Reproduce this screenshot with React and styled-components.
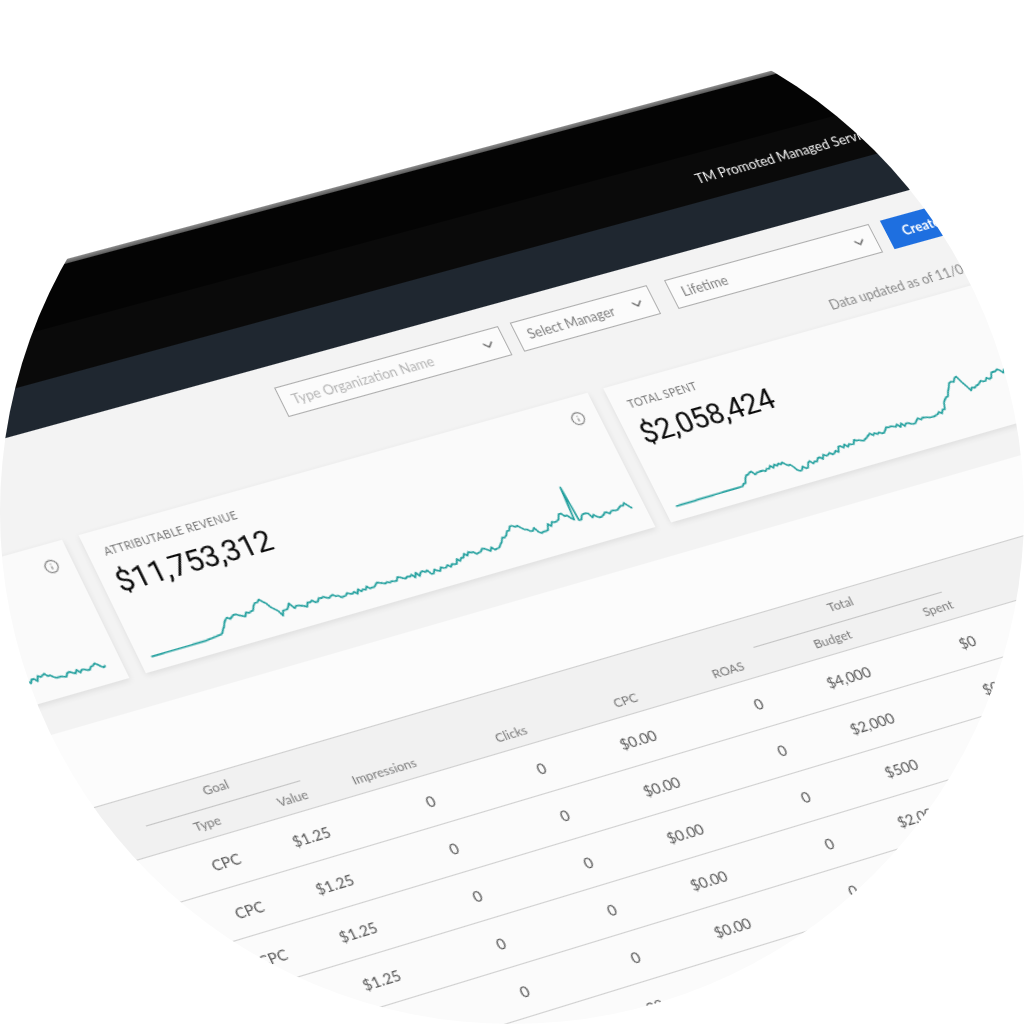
import React from 'react';
import styled, { createGlobalStyle } from 'styled-components';
import { ChevronDown, Info } from 'lucide-react';

// flat page -> tilted screen, from four measured points of the reference
const projection = (() => {
  const [x0, y0, x1, y1, x2, y2, x3, y3] = [-42, 288, 466, 152.3, 758.3, 730.5, 247.9, 882.6];
  const left = 120;
  const w = 507;
  const h = 595;
  const dx1 = x1 - x2;
  const dx2 = x3 - x2;
  const sx = x0 - x1 + x2 - x3;
  const dy1 = y1 - y2;
  const dy2 = y3 - y2;
  const sy = y0 - y1 + y2 - y3;
  const den = dx1 * dy2 - dx2 * dy1;
  const g = (sx * dy2 - dx2 * sy) / den;
  const k = (dx1 * sy - sx * dy1) / den;
  const A = (x1 - x0 + g * x1) / w;
  const B = (x3 - x0 + k * x3) / h;
  const D = (y1 - y0 + g * y1) / w;
  const E = (y3 - y0 + k * y3) / h;
  const G = g / w;
  const H = k / h;
  const C = x0 - left * A;
  const F = y0 - left * D;
  const I = 1 - left * G;
  return [A, D, 0, G, B, E, 0, H, 0, 0, 1, 0, C, F, 0, I].join(',');
})();

const noise = (i, seed) => {
  const n = Math.sin(i * 12.9898 + seed) * 43758.5453;
  return n - Math.floor(n) - 0.5;
};

const jagged = (points, seed, calmUntil = 0, amp = 5) => {
  const out = [];
  let i = 0;
  points.forEach(([x, y], p) => {
    const next = points[p + 1];
    if (!next) {
      out.push([x, y]);
      return;
    }
    const steps = Math.max(1, Math.round(Math.abs(next[0] - x) / 2.2));
    for (let s = 0; s < steps; s++) {
      const t = s / steps;
      const px = x + (next[0] - x) * t;
      const py = y + (next[1] - y) * t;
      const a = px < calmUntil ? 0 : s === 0 ? 0 : amp;
      out.push([px, py + noise(i++, seed) * a]);
    }
  });
  return out.map(([x, y]) => `${x.toFixed(1)},${y.toFixed(1)}`).join(' ');
};

const revenueLine = [[16, 118.6], [68, 118.4], [84, 116.7], [94, 104.6], [117, 104.5], [131, 95], [138, 105], [145, 115.7], [155, 106], [158, 112], [194, 110.4], [205, 114], [244, 112], [310, 115], [327, 106.4], [358, 110.3], [381, 93.5], [406, 107], [429, 95], [438, 104], [440, 71], [442, 106], [451, 101.3], [455, 107], [474, 106], [489, 101.8], [494, 108.9]];
const spentLine = [[16, 118.5], [84, 117.7], [92, 108.7], [124, 107.8], [130, 106], [140, 117], [183, 109.4], [226, 103.4], [296, 103], [314, 81], [326, 72.5], [333, 89.4], [364, 78], [420, 86], [500, 70]];
const leftLine = [[415, 113.5], [434, 108.4], [447, 114], [485, 113], [491, 115.4]];

const rows = [
  ['CPC', '$1.25', '0', '0', '$0.00', '0', '$4,000', '$0'],
  ['CPC', '$1.25', '0', '0', '$0.00', '0', '$2,000', '$0'],
  ['CPC', '$1.25', '0', '0', '$0.00', '0', '$500', ''],
  ['', '$1.25', '0', '0', '$0.00', '0', '$2,000', ''],
  ['', '$1.25', '0', '0', '$0.00', '0', '', ''],
  ['', '', '', '38', '$1.10', '', '', '']
];

const headers = ['Type', 'Value', 'Impressions', 'Clicks', 'CPC', 'ROAS', 'Budget', 'Spent'];

const Sparkline = ({ points, seed, calmUntil }) => (
  <Chart viewBox="4.5 60.5 501.5 72" preserveAspectRatio="none">
    <polyline points={ jagged(points, seed, calmUntil) } />
  </Chart>
);

const Select = ({ width, label, faint, gap }) => (
  <SelectBox $width={ width } $gap={ gap }>
    <SelectText $faint={ faint }>{ label }</SelectText>
    <ChevronDown size={ 16 } color="#666" />
  </SelectBox>
);

const StatCard = ({ label, value, points, seed, calmUntil }) => (
  <Card>
    <CardHead>
      <CardLabel>{ label }</CardLabel>
      <Info size={ 14 } color="#858585" />
    </CardHead>
    <CardValue>{ value }</CardValue>
    <Sparkline points={ points } seed={ seed } calmUntil={ calmUntil } />
  </Card>
);

export default function App() {
  return (
    <>
      <GlobalStyle />
      <Circle>
        <Dashboard>
          <Bevel />
          <BlackBand />
          <TitleBand>
            <Title>TM Promoted Managed Services</Title>
          </TitleBand>
          <NavBand />
          <Main>
            <FilterRow>
              <Select width={ 225 } label="Type Organization Name" faint />
              <Select width={ 140 } label="Select Manager" />
              <Select width={ 213 } label="Lifetime" gap={ 6 } />
              <CreateButton>Create Campaign</CreateButton>
            </FilterRow>
            <NoteRow>Data updated as of 11/06/2018</NoteRow>
            <CardRow>
              <StatCard label="" value="" points={ leftLine } seed={ 3 } />
              <StatCard label="Attributable Revenue" value="$11,753,312" points={ revenueLine } seed={ 7 } calmUntil={ 84 } />
              <StatCard label="Total Spent" value="$2,058,424" points={ spentLine } seed={ 11 } calmUntil={ 84 } />
            </CardRow>
            <Panel>
              <TableHead>
                <GoalGroup>Goal</GoalGroup>
                <TotalGroup>Total</TotalGroup>
                { headers.map((h, i) => (
                  <HeadCell key={ h } $col={ i + 2 } $center={ i < 2 }>{ h }</HeadCell>
                )) }
              </TableHead>
              { rows.map((r, i) => (
                <TableRow key={ i }>
                  { r.map((c, j) => (
                    <Cell key={ j } $col={ j + 2 } $center={ j < 2 }>{ c }</Cell>
                  )) }
                </TableRow>
              )) }
            </Panel>
          </Main>
        </Dashboard>
      </Circle>
    </>
  );
}

const GlobalStyle = createGlobalStyle`
  html, body {
    margin: 0;
    background: #fff;
  }
`;

const Circle = styled.div`
  width: 1024px;
  height: 1024px;
  border-radius: 50%;
  overflow: hidden;
  background: #fff;
`;

const Dashboard = styled.div`
  width: 1130px;
  height: 860px;
  overflow: hidden;
  font-family: Lato, "Open Sans", sans-serif;
  transform-origin: 0 0;
  transform: matrix3d(${ projection });
  filter: blur(0.6px);
`;

const Bevel = styled.div`
  height: 4px;
  background: linear-gradient(#8c8c8c, #5a5a5a);
`;

const BlackBand = styled.div`
  height: 54px;
  background: #040404;
`;

const TitleBand = styled.div`
  box-sizing: border-box;
  height: 46px;
  padding: 2px 0 0 823px;
  display: flex;
  align-items: center;
  background: #0a0a0a;
`;

const Title = styled.span`
  font-size: 13.3px;
  color: #f4f4f4;
  white-space: nowrap;
`;

const NavBand = styled.div`
  height: 42px;
  background: #1f2730;
`;

const Main = styled.div`
  height: 714px;
  background: #f3f3f3;
`;

const FilterRow = styled.div`
  display: flex;
  gap: 12px;
  padding: 21px 0 0 352px;
`;

const SelectBox = styled.div`
  box-sizing: border-box;
  width: ${ p => p.$width }px;
  height: 30px;
  margin-left: ${ p => p.$gap || 0 }px;
  padding: 0 8px 0 10px;
  display: flex;
  align-items: center;
  justify-content: space-between;
  flex: none;
  background: #fbfbfb;
  border: 1.5px solid #adadad;
`;

const SelectText = styled.span`
  font-size: 13px;
  color: ${ p => p.$faint ? '#b5b5b5' : '#808080' };
`;

const CreateButton = styled.div`
  box-sizing: border-box;
  width: 130px;
  height: 30px;
  padding-left: 16px;
  display: flex;
  align-items: center;
  flex: none;
  font-size: 13px;
  font-weight: 700;
  color: #fff;
  background: #1e6fe0;
`;

const NoteRow = styled.div`
  height: 53px;
  box-sizing: border-box;
  padding: 26px 0 0 886px;
  font-size: 13px;
  line-height: 18px;
  color: #8a8a8a;
  white-space: nowrap;
`;

const CardRow = styled.div`
  display: flex;
  gap: 16px;
  margin-left: -403px;
`;

const Card = styled.div`
  box-sizing: border-box;
  width: 507px;
  height: 138px;
  flex: none;
  display: flex;
  flex-direction: column;
  background: #fafafa;
  box-shadow: 0 2px 6px rgba(0, 0, 0, 0.09);
`;

const CardHead = styled.div`
  display: flex;
  align-items: center;
  justify-content: space-between;
  padding: 11px 13px 0 15px;
  height: 20px;
`;

const CardLabel = styled.span`
  font-size: 10.5px;
  letter-spacing: 0.3px;
  color: #7a7a7a;
  text-transform: uppercase;
`;

const CardValue = styled.div`
  padding-left: 13px;
  height: 32px;
  margin-top: 5px;
  font-family: Roboto, Lato, sans-serif;
  font-weight: 400;
  font-size: 28.5px;
  line-height: 32px;
  letter-spacing: -0.4px;
  color: #0c0c0c;
`;

const Chart = styled.svg`
  display: block;
  width: 507px;
  height: 72px;
  margin-top: auto;

  polyline {
    fill: none;
    stroke: #23a09e;
    stroke-width: 1.7;
    stroke-linejoin: round;
  }
`;

const Panel = styled.div`
  margin-top: 30px;
  padding-top: 73px;
  height: 100%;
  background: #fcfcfc;
`;

const columns = '55px 110px 56px 93px 110px 111px 108px 110px 109px';

const TableHead = styled.div`
  box-sizing: border-box;
  height: 57px;
  display: grid;
  grid-template-columns: ${ columns };
  grid-template-rows: 29px 28px;
  background: #f1f1f1;
  border-top: 1.8px solid #cfcfcf;
  border-bottom: 1.8px solid #cfcfcf;
  font-size: 12px;
  color: #7a7a7a;
`;

const GoalGroup = styled.div`
  grid-column: 2 / 4;
  grid-row: 1;
  margin-right: 14px;
  margin-left: 2px;
  text-align: center;
  line-height: 25px;
  border-bottom: 1.5px solid #c4c4c4;
`;

const TotalGroup = styled.div`
  grid-column: 8 / 10;
  grid-row: 1;
  margin: 0 8px 0 17px;
  text-align: center;
  line-height: 25px;
  border-bottom: 1.5px solid #c4c4c4;
`;

const HeadCell = styled.div`
  grid-row: 2;
  grid-column: ${ p => p.$col };
  align-self: center;
  padding-bottom: 3px;
  text-align: ${ p => p.$center ? 'center' : 'right' };

  &:last-child {
    padding-right: 4px;
  }
`;

const TableRow = styled.div`
  box-sizing: border-box;
  height: 47px;
  display: grid;
  grid-template-columns: ${ columns };
  align-items: center;
  background: #fbfbfb;
  border-bottom: 1.8px solid #d0d0d0;
  font-size: 14px;
  color: #555;
`;

const Cell = styled.div`
  grid-column: ${ p => p.$col };
  text-align: ${ p => p.$center ? 'center' : 'right' };
`;
